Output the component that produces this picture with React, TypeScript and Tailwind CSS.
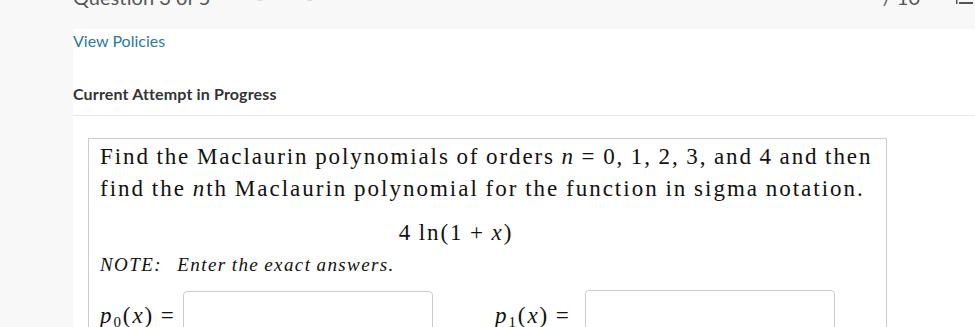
import React from "react";

const serif = { fontFamily: '"Liberation Serif", "DejaVu Serif", serif' } as React.CSSProperties;

function I({ children }: { children: React.ReactNode }) {
  return <span className="italic">{children}</span>;
}

export default function App() {
  return (
    <div className="min-h-screen bg-[#f8f8f8] font-['Lato',sans-serif] text-[#333]">
      {/* top bar, mostly scrolled out of view */}
      <div className="h-[29px] overflow-hidden">
        <div className="mt-[-13px] flex items-start pl-[73px] text-[20px] leading-[20px] text-[#555]">
          <span className="w-[183px]">Question 3 of 5</span>
          <span className="w-[50px] text-[#aaa]">-</span>
          <span className="text-[#aaa]">-</span>
          <span className="ml-auto">/ 10</span>
          <svg className="ml-[36px] mr-[2px] mt-[-1px]" width="17" height="20" viewBox="0 0 17 20">
            <rect x="0" y="0" width="1.5" height="18" fill="#555" />
            <rect x="3" y="4" width="14" height="2" fill="#555" />
            <rect x="3" y="10" width="14" height="2" fill="#555" />
            <rect x="3" y="16" width="14" height="2" fill="#555" />
          </svg>
        </div>
      </div>

      <div className="ml-[73px] bg-white pb-[40px]">
        <div className="pt-[2px] text-[16px] leading-[20px]">
          <a className="text-[#2a7a9b]" href="#">
            View Policies
          </a>
        </div>
        <div className="mt-[33px] border-b border-[#e8e8e8] pb-[11px] text-[16px] font-bold leading-[20px] tracking-[0.15px] text-[#333]">
          Current Attempt in Progress
        </div>

        <div
          className="ml-[15px] mt-[22px] w-[799px] border border-[#cccccc] pb-[20px] pl-[11px] pt-[2px] text-[23px] text-[#111] tracking-[1.9px] [word-spacing:-1px]"
          style={serif}
        >
          <div className="leading-[32px]">
            <div>
              Find the Maclaurin polynomials of orders <I>n</I> = 0, 1, 2, 3, and 4 and then
            </div>
            <div className="tracking-[2px]">
              find the <I>n</I>th Maclaurin polynomial for the function in sigma notation.
            </div>
          </div>
          <div className="mt-[12px] w-[712px] text-center leading-[32px]">
            4 ln(1 + <I>x</I>)
          </div>
          <div className="mt-[0px] text-[19px] italic leading-[32px] tracking-[1.4px]">
            NOTE:&nbsp;&nbsp;&nbsp;Enter the exact answers.
          </div>
          <div className="mt-[10px] grid grid-cols-[395px_395px]">
            <div className="flex items-start">
              <span className="mt-[9px] w-[83px] leading-[32px]">
                <I>p</I>
                <sub className="text-[15px]">0</sub>(<I>x</I>) =
              </span>
              <div className="h-[40px] w-[250px] rounded-[4px] border-[1.5px] border-[#cccccc]" />
            </div>
            <div className="flex items-start">
              <span className="mt-[9px] w-[90px] leading-[32px]">
                <I>p</I>
                <sub className="text-[15px]">1</sub>(<I>x</I>) =
              </span>
              <div className="mt-[-1px] h-[40px] w-[250px] rounded-[4px] border-[1.5px] border-[#cccccc]" />
            </div>
          </div>
        </div>
      </div>
    </div>
  );
}
